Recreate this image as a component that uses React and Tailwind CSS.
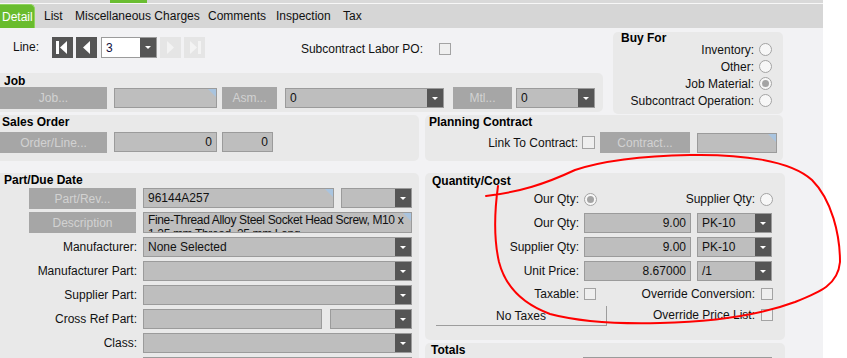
import React from 'react';

const Arrow = () => (
  <div className="w-0 h-0 border-l-[3px] border-r-[3px] border-t-[3px] border-l-transparent border-r-transparent border-t-white" />
);

const Corner = () => (
  <div className="absolute top-0 right-0 w-0 h-0 border-l-[8px] border-l-transparent border-t-[8px] border-t-[#a9c4df]" />
);

const Field = ({ className = '', right, corner, children }) => (
  <div
    className={`relative h-[20px] shrink-0 border border-[#9b9b9b] bg-[#bebebe] flex items-center px-[4px] text-[12px] text-[#111] overflow-hidden ${
      right ? 'justify-end' : ''
    } ${className}`}
  >
    {children}
    {corner && <Corner />}
  </div>
);

const Combo = ({ className = '', value, white }) => (
  <div className={`h-[20px] shrink-0 border border-[#9b9b9b] flex ${className}`}>
    <div className={`flex-1 flex items-center px-[4px] text-[12px] text-[#111] ${white ? 'bg-white' : 'bg-[#bebebe]'}`}>
      {value}
    </div>
    <div className="w-[16px] bg-[#555555] flex items-center justify-center">
      <Arrow />
    </div>
  </div>
);

const Btn = ({ className = '', children }) => (
  <div className={`h-[21px] shrink-0 bg-[#a6a6a6] text-[#d2d2d2] text-[12px] flex items-center justify-center ${className}`}>
    {children}
  </div>
);

const Check = ({ className = '' }) => (
  <div className={`w-[12px] h-[12px] shrink-0 border border-[#a3a3a3] bg-[#efefef] ${className}`} />
);

const Radio = ({ on, className = '' }) => (
  <div className={`w-[13px] h-[13px] shrink-0 rounded-full border border-[#a3a3a3] bg-[#f7f7f7] flex items-center justify-center ${className}`}>
    {on && <div className="w-[7px] h-[7px] rounded-full bg-[#a4a4a4]" />}
  </div>
);

const NavBtn = ({ dark, children }) => (
  <div className={`w-[21px] h-[21px] flex items-center justify-center ${dark ? 'bg-[#555555]' : 'bg-[#e5e5e5]'}`}>
    {children}
  </div>
);

const Title = ({ className = '', children }) => (
  <div className={`text-[12px] font-bold leading-[14px] text-black ${className}`}>{children}</div>
);

const App = () => {
  return (
    <div className="relative w-[847px] h-[358px] overflow-hidden bg-white font-['Liberation_Sans',Arial,sans-serif] text-[12px] text-[#111]">
      <div className="w-[823px] h-full overflow-hidden bg-[#f2f2f4] flex flex-col">
        {/* tab strip from the window above */}
        <div className="h-[3px] shrink-0 bg-[#d9d9d9] flex">
          <div className="ml-[110px] w-[37px] bg-[#6abd31]" />
        </div>
        <div className="h-[1px] shrink-0 bg-[#f7f7f7]" />

        {/* Tabs */}
        <div className="h-[24px] shrink-0 bg-[#d6d6d6] flex items-center">
          <div className="h-full w-[35px] bg-[#69bc2d] border-t border-r border-[#8fd35c] rounded-tr-[5px] text-white flex items-center pl-[2px]">
            Detail
          </div>
          <span className="ml-[9px] w-[31px]">List</span>
          <span className="w-[133px]">Miscellaneous Charges</span>
          <span className="w-[68px]">Comments</span>
          <span className="w-[67px]">Inspection</span>
          <span>Tax</span>
        </div>

        {/* Row 1 */}
        <div className="h-[87px] shrink-0 flex">
          <div className="w-[604px] flex flex-col">
            <div className="h-[45px] shrink-0 flex items-start pt-[9px]">
              <span className="ml-[13px] w-[39px] leading-[21px]">Line:</span>
              <NavBtn dark>
                <svg width="13" height="13" viewBox="0 0 13 13">
                  <rect x="0" y="0" width="3" height="13" fill="white" />
                  <polygon points="11,0 11,13 4,6.5" fill="white" />
                </svg>
              </NavBtn>
              <div className="ml-[3px]">
                <NavBtn dark>
                  <svg width="9" height="13" viewBox="0 0 9 13">
                    <polygon points="8,0 8,13 1,6.5" fill="white" />
                  </svg>
                </NavBtn>
              </div>
              <Combo white value={<span className="text-[#101040]">3</span>} className="ml-[4px] w-[56px] h-[21px]" />
              <div className="ml-[3px]">
                <NavBtn>
                  <svg width="9" height="13" viewBox="0 0 9 13">
                    <polygon points="1,0 1,13 8,6.5" fill="#f3f3f3" />
                  </svg>
                </NavBtn>
              </div>
              <div className="ml-[3px]">
                <NavBtn>
                  <svg width="13" height="13" viewBox="0 0 13 13">
                    <polygon points="2,0 2,13 9,6.5" fill="#f3f3f3" />
                    <rect x="10" y="0" width="3" height="13" fill="#f3f3f3" />
                  </svg>
                </NavBtn>
              </div>
              <div className="w-[218px] text-right mt-[5px] leading-[14px]">Subcontract Labor PO:</div>
              <Check className="ml-[16px] mt-[6px]" />
            </div>

            {/* Job */}
            <div className="h-[39px] shrink-0 w-[603px] bg-[#e9e9e9] rounded-r-[5px]">
              <Title className="pl-[4px] h-[14px] pt-[1px]">Job</Title>
              <div className="flex items-start">
                <Btn className="w-[107px] h-[22px]">Job...</Btn>
                <Field corner className="ml-[7px] w-[103px] mt-[1px]" />
                <Btn className="ml-[5px] w-[55px] h-[22px]">Asm...</Btn>
                <Combo value="0" className="ml-[8px] w-[159px] mt-[1px]" />
                <Btn className="ml-[9px] w-[59px] h-[22px]">Mtl...</Btn>
                <Combo value="0" className="ml-[4px] w-[79px] mt-[1px]" />
              </div>
            </div>
          </div>

          {/* Buy For */}
          <div className="ml-[9px] mt-[4px] w-[170px] h-[82px] bg-[#e9e9e9] rounded-[5px]">
            <Title className="pl-[8px] h-[10px] -mt-[1px]">Buy For</Title>
            {[
              ['Inventory:', false],
              ['Other:', false],
              ['Job Material:', true],
              ['Subcontract Operation:', false],
            ].map(([label, on]) => (
              <div key={label} className="h-[17px] flex items-center justify-end pr-[11px]">
                <span>{label}</span>
                <Radio on={on} className="ml-[5px]" />
              </div>
            ))}
          </div>
        </div>

        {/* Row 2 */}
        <div className="h-[46px] shrink-0 flex">
          <div className="w-[419px] bg-[#e9e9e9] rounded-r-[5px]">
            <Title className="pl-[2px] h-[17px]">Sales Order</Title>
            <div className="flex items-start">
              <Btn className="w-[107px]">Order/Line...</Btn>
              <Field right className="ml-[7px] w-[103px]">0</Field>
              <Field right className="ml-[5px] w-[51px]">0</Field>
            </div>
          </div>
          <div className="ml-[6px] w-[358px] bg-[#e9e9e9] rounded-[5px]">
            <Title className="pl-[4px] h-[17px]">Planning Contract</Title>
            <div className="flex items-center">
              <div className="w-[153px] text-right">Link To Contract:</div>
              <Check className="ml-[4px] w-[13px] h-[13px]" />
              <Btn className="ml-[5px] w-[90px]">Contract...</Btn>
              <Field corner className="ml-[7px] w-[80px]" />
            </div>
          </div>
        </div>

        {/* Row 3 */}
        <div className="mt-[12px] shrink-0 h-[200px] flex">
          {/* Part/Due Date */}
          <div className="w-[419px] bg-[#e9e9e9] rounded-tr-[5px]">
            <Title className="pl-[4px] h-[15px]">Part/Due Date</Title>
            <div className="h-[24px] flex items-start">
              <div className="w-[137px] flex justify-end pr-[1px]">
                <Btn className="w-[107px]">Part/Rev...</Btn>
              </div>
              <Field corner className="ml-[6px] w-[191px]">96144A257</Field>
              <Combo className="ml-[7px] w-[71px]" />
            </div>
            <div className="h-[24px] flex items-start">
              <div className="w-[137px] flex justify-end pr-[1px]">
                <Btn className="w-[107px]">Description</Btn>
              </div>
              <div className="relative ml-[6px] w-[269px] h-[21px] border border-[#9b9b9b] bg-[#bebebe] overflow-hidden pl-[4px] leading-[14px] whitespace-nowrap tracking-[-0.35px]">
                Fine-Thread Alloy Steel Socket Head Screw, M10 x
                <br />
                1.25 mm Thread, 25 mm Long
                <Corner />
              </div>
            </div>
            {[
              ['Manufacturer:', 'None Selected'],
              ['Manufacturer Part:', ''],
              ['Supplier Part:', ''],
            ].map(([label, v]) => (
              <div key={label} className="h-[24px] flex items-start">
                <div className="w-[137px] text-right leading-[22px]">{label}</div>
                <Combo value={v} className="ml-[6px] mt-[1px] w-[269px]" />
              </div>
            ))}
            <div className="h-[24px] flex items-start">
              <div className="w-[137px] text-right leading-[22px]">Cross Ref Part:</div>
              <Field className="ml-[6px] mt-[1px] w-[179px]" />
              <Combo className="ml-[8px] mt-[1px] w-[82px]" />
            </div>
            <div className="h-[24px] flex items-start">
              <div className="w-[137px] text-right leading-[22px]">Class:</div>
              <Combo className="ml-[6px] mt-[1px] w-[269px]" />
            </div>
            <div className="h-[24px] flex items-start">
              <div className="w-[137px]" />
              <Field className="ml-[6px] mt-[1px] w-[269px]" />
            </div>
          </div>

          {/* Right column */}
          <div className="ml-[6px] w-[360px] flex flex-col">
            <div className="h-[167px] shrink-0 bg-[#e9e9e9] rounded-[5px]">
              <Title className="pl-[7px] h-[14px] pt-[1px]">Quantity/Cost</Title>
              <div className="h-[24px] flex items-center pr-[12px]">
                <div className="w-[154px] text-right">Our Qty:</div>
                <Radio on className="ml-[5px]" />
                <div className="flex-1 text-right">Supplier Qty:</div>
                <Radio className="ml-[5px]" />
              </div>
              <div className="h-[1px]" />
              {[
                ['Our Qty:', '9.00', 'PK-10'],
                ['Supplier Qty:', '9.00', 'PK-10'],
                ['Unit Price:', '8.67000', '/1'],
              ].map(([label, v, u]) => (
                <div key={label} className="h-[24px] flex items-start">
                  <div className="w-[154px] text-right leading-[22px]">{label}</div>
                  <Field right className="ml-[5px] mt-[1px] w-[107px]">{v}</Field>
                  <Combo value={u} className="ml-[6px] mt-[1px] w-[75px]" />
                </div>
              ))}
              <div className="h-[20px] flex items-center pr-[12px]">
                <div className="w-[154px] text-right">Taxable:</div>
                <Check className="ml-[5px]" />
                <div className="flex-1 text-right">Override Conversion:</div>
                <Check className="ml-[6px]" />
              </div>
              <div className="h-[22px] flex items-center pr-[12px]">
                <div className="ml-[11px] w-[171px] h-[20px] mt-[2px] border-r border-b border-[#9d9d9d] flex items-center justify-center">
                  No Taxes
                </div>
                <div className="flex-1 text-right">Override Price List:</div>
                <Check className="ml-[6px]" />
              </div>
            </div>
            <div className="mt-[3px] flex-1 bg-[#e9e9e9] rounded-t-[5px]">
              <Title className="pl-[6px] h-[14px]">Totals</Title>
              <Field className="ml-[158px] w-[189px]" />
            </div>
          </div>
        </div>
      </div>

      {/* red hand-drawn annotation */}
      <svg className="absolute inset-0 pointer-events-none" width="847" height="358" viewBox="0 0 847 358">
        <path
          d="M 486 196 C 520 192, 545 184, 575 170 C 605 160, 640 156, 690 155 C 740 154, 790 160, 812 180 C 832 200, 840 235, 840 262 C 838 285, 820 292, 795 302 C 760 315, 710 322, 660 323 C 620 324, 580 322, 550 314 C 520 303, 505 285, 499 262 C 494 240, 494 215, 498 186"
          fill="none"
          stroke="#ff0000"
          strokeWidth="2"
          strokeLinecap="round"
        />
      </svg>
    </div>
  );
};

export default App;
